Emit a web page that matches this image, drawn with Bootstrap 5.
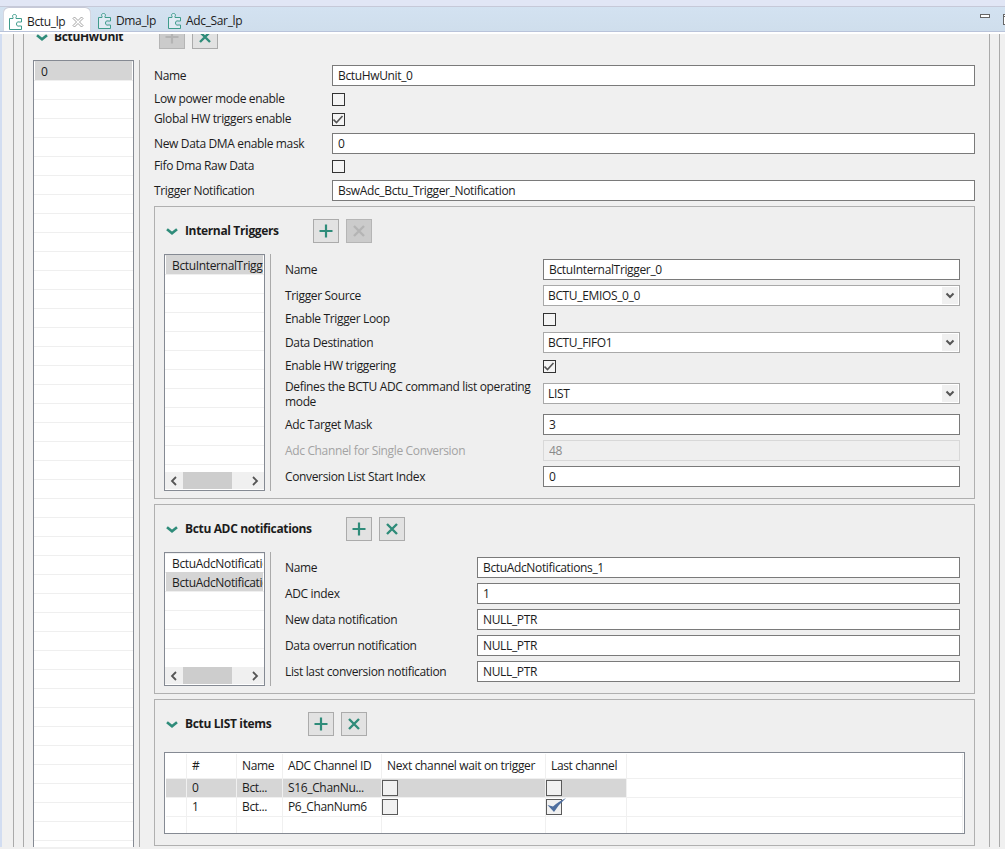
<!DOCTYPE html>
<html lang="en">
<head>
<meta charset="utf-8">
<title>Bctu_Ip</title>
<link href="https://cdn.jsdelivr.net/npm/bootstrap@5.3.0/dist/css/bootstrap.min.css" rel="stylesheet">
<style>
html,body{height:849px;overflow:hidden}
body{background:#f0f0f0;color:#1c1c1c;font:12px/16px "Open Sans","Noto Sans",sans-serif;letter-spacing:-.35px}
.topband{height:6px;background:#e1e6f5}
.tabbar{height:26px;border-top:1px solid #c6c9d8;border-bottom:1px solid #b9c3da;background:linear-gradient(#d3e2f1,#cfdeec);overflow:hidden;padding-left:3px;align-items:flex-start}
.tabbar .tb-item{height:25px;display:flex;align-items:center;gap:4px;color:#1c1c1c;font-size:12px;padding:2px 0 0 6px}
.tb-active{width:88px;height:27px!important;background:#fff;border-radius:6px 6px 0 0;box-shadow:inset 0 1px 0 #c6c9d8,inset 1px 0 0 #d5d8e2,inset -1px 0 0 #d5d8e2;margin-right:1px}
.tb-active svg.closex{margin-left:3px}
.tb-two{margin-right:6px}
.winbtns{margin-left:auto;gap:13px;height:25px;margin-right:-8px}
.contentwrap{height:815px;border-top:2px solid #fff;margin-top:0;overflow:hidden;background:linear-gradient(90deg,#d2ddf1 2px,#f0f0f0 2px);padding:0 5px 0 13px}
.shell-a,.shell-b{height:100%;border-left:1px solid #aaa;border-right:1px solid #aaa}
.shell-a{padding:0 9px}
.shell-b{padding:0 14px 0 9px;overflow:hidden}
.hd-row{display:flex;align-items:center;height:24px}
.hw-top{margin-top:-9px}
.hd-chev{width:12px;margin-left:3px;margin-right:6px;flex:none}
.sect .hd-chev{margin-left:2px;margin-right:7px}
.hd-title{font-weight:700;font-size:12px;white-space:nowrap;flex:none}
.w-hw{width:105px}.w-int{width:128px}.w-adc{width:161px}.w-lst{width:123px}
.tool{width:26px;height:24px;padding:0;border:1px solid #ababab;border-radius:0;background:#e2e2e2;display:flex;align-items:center;justify-content:center;margin-right:7px}
.tool:disabled{opacity:1;background:#cbcbcb;border-color:#b5b5b5}
.body-main{display:flex;margin-top:11px}
.hw-list{width:101px;min-height:800px;flex:none}
.lst{background-color:#fff;border:1px solid #858a93;padding:0 1px;display:flex;flex-direction:column;overflow:hidden;background-image:repeating-linear-gradient(#efefef 0 1px,transparent 1px 19px)}
.lst .list-group{border-radius:0;flex:1 1 auto}
.lst .list-group-item{height:19px;padding:3px 0 0 6px;background:transparent;border:0;border-radius:0;color:#1c1c1c;font-size:12px;line-height:16px;white-space:nowrap;overflow:hidden}
.lst .sel{background:#d5d5d5}
.hscroll{height:17px;display:flex;align-items:center;justify-content:space-between;background:#f0f0f0;margin:0 -1px 1px;flex:none;position:relative;padding:0 5px}
.thumb{position:absolute;left:18px;top:0;bottom:0;width:49px;background:#cdcdcd}
.split{width:1px;background:#aaa;flex:none}
.split-m{margin:0 14px 0 5px}
.split-s{margin:0 14px 0 5px}
.fm{flex:1 1 auto;min-width:0;display:flex;flex-direction:column}
.frow{display:flex;align-items:center;height:21px;margin-top:5px;flex:none}
.frow.ck{height:20px;margin-top:3px}
.frow.ck .lb{margin-bottom:2px}
.frow.nx{margin-top:0}
.frow.m2{margin-top:2px}
.frow.m3{margin-top:3px}
.frow.m4{margin-top:4px}
.frow.m7{margin-top:7px}
.frow.first{margin-top:0}
.frow.tall{height:28px;margin-top:3px}
.frow.tall .lb{padding-top:2px}
.lb{flex:none;line-height:15px}
.lb-a{width:178px}.lb-b{width:258px}.lb-c{width:192px}
.lb-dis{color:#a3a3a3}
.txt.form-control{height:21px;min-height:21px;padding:0 5px;font-size:12px;line-height:19px;letter-spacing:-.35px;color:#1c1c1c;border:1px solid #7a7a7a;border-radius:0;background-color:#fff;box-shadow:none}
.txt.form-control:disabled{background:#efefef;border-color:#d8d8d8;color:#8a8a8a;opacity:1}
.pick.form-select{height:21px;min-height:21px;padding:0 20px 0 4px;font-size:12px;line-height:19px;letter-spacing:-.35px;color:#1c1c1c;border:1px solid #a9a9a9;border-radius:0;background-color:#fff;background-position:right 1px center;background-size:16px 17px;background-image:url("data:image/svg+xml,%3Csvg xmlns='http://www.w3.org/2000/svg' width='16' height='17'%3E%3Crect width='16' height='17' fill='%23f0f0f0'/%3E%3Cpath d='M4.5 6.5 8 10l3.5-3.5' fill='none' stroke='%23555' stroke-width='2'/%3E%3C/svg%3E")}
.cbx.form-check-input{width:13px;height:13px;margin:0;border:1px solid #333;border-radius:0;background-color:#f4f4f4;box-shadow:none;flex:none}
.cbx.form-check-input:checked{background-color:#f4f4f4;border-color:#333;background-size:13px 13px;background-image:url("data:image/svg+xml,%3Csvg xmlns='http://www.w3.org/2000/svg' width='13' height='13'%3E%3Cpath d='M1.5 6.5 4.5 9.5 10.500 3' fill='none' stroke='%23555' stroke-width='1.6'/%3E%3C/svg%3E")}
.sect{background:#efefef;border:1px solid #b0b0b0;padding:12px 14px 7px 9px}
.sect-a{margin-top:5px}
.sect-b{margin-top:5px}
.sect-c{margin-top:5px;padding-bottom:11px}
.sect-in{display:flex;margin-top:11px}
.sl{width:101px;flex:none}
.fmpad{padding:5px 0 4px}
.gridbox{margin:16px -5px 0 0;height:82px;border:1px solid #858a93;background:#fff;padding:1px;overflow:hidden}
.dt{table-layout:fixed;border-collapse:collapse;width:100%;font-size:12px;line-height:16px}
.dt th,.dt td{font-weight:400;padding:0 0 0 5.500px;white-space:nowrap;overflow:hidden;border-right:1px solid #f0f0f0;border-bottom:1px solid #f0f0f0;vertical-align:middle;height:19px}
.dt th{height:24px}
.dt tr.sel-row td{background:#d6d6d6}
.dt tr.sel-row td.fill{background:#fff}
.dt td.bcell{padding-left:0;overflow:visible;position:relative}
.bx{display:block;width:16px;height:16px;border:1px solid #5a5a5a;background:#f1f1f1}
.tick{position:absolute;left:0;top:0}
.c0{width:20px}.c1{width:50px}.c2{width:46px}.c3{width:99px}.c4{width:164px}.c5{width:81px}
</style>
</head>
<body>
<svg width="0" height="0" class="d-block position-absolute" aria-hidden="true">
  <defs>
    <symbol id="puz" viewBox="0 0 14 16"><path d="M.5 4.500H4V3.200C3 2 3.600.5 5.500.5S8 2 7 3.200V4.500h5.500V8H10C8.600 7.400 7.500 8.400 7.500 10s1.100 2.600 2.500 2H12.500V15.500H.5Z" fill="#fff" fill-opacity=".35" stroke="#3f9c8c"/></symbol>
    <symbol id="plus" viewBox="0 0 16 16"><path d="M8 1.500V14.500M1.500 8H14.500" stroke="currentColor" stroke-width="2.200" fill="none"/></symbol>
    <symbol id="cross" viewBox="0 0 16 16"><path d="M3 3 13 13M13 3 3 13" stroke="currentColor" stroke-width="2.400" fill="none"/></symbol>
    <symbol id="chev" viewBox="0 0 12 7"><path d="M1 1.200 6 5.300 11 1.200" fill="none" stroke="#2f8c7a" stroke-width="2.600"/></symbol>
    <symbol id="sl" viewBox="0 0 8 10"><path d="M6 1 2 5l4 4" fill="none" stroke="#555" stroke-width="1.800"/></symbol>
    <symbol id="sr" viewBox="0 0 8 10"><path d="M2 1l4 4-4 4" fill="none" stroke="#555" stroke-width="1.800"/></symbol>
  </defs>
</svg>

<div class="topband"></div>
<div class="tabbar d-flex">
  <div class="tb-item tb-active">
    <svg width="14" height="16"><use href="#puz"/></svg><span>Bctu_lp</span>
    <svg class="closex" width="12" height="12" viewBox="0 0 12 12"><path d="M1 2.500 2.500 1 6 4.500 9.500 1 11 2.500 7.500 6 11 9.500 9.500 11 6 7.500 2.500 11 1 9.500 4.500 6Z" fill="#fff" stroke="#8a8a8a" stroke-width=".8"/></svg>
  </div>
  <div class="tb-item tb-two"><svg width="14" height="16"><use href="#puz"/></svg><span>Dma_lp</span></div>
  <div class="tb-item"><svg width="14" height="16"><use href="#puz"/></svg><span>Adc_Sar_lp</span></div>
  <div class="winbtns d-flex align-items-center">
    <svg width="10" height="4" viewBox="0 0 10 4" class="mb-2"><rect x=".5" y=".5" width="9" height="3" fill="#fff" stroke="#666"/></svg>
    <svg width="10" height="11" viewBox="0 0 10 11"><rect x=".5" y=".5" width="9" height="10" fill="#fff" stroke="#666"/><path d="M0 2.500H10" stroke="#666"/></svg>
  </div>
</div>

<div class="contentwrap">
 <div class="shell-a">
  <div class="shell-b">
    <div class="hd-row hw-top">
      <svg class="hd-chev" height="7"><use href="#chev"/></svg>
      <span class="hd-title w-hw">BctuHwUnit</span>
      <button class="tool btn" type="button" disabled aria-label="Add"><svg width="16" height="16" style="color:#b4b4b4"><use href="#plus"/></svg></button>
      <button class="tool btn" type="button" aria-label="Remove"><svg width="16" height="16" style="color:#2f8c7a"><use href="#cross"/></svg></button>
    </div>

    <div class="body-main">
      <div class="lst hw-list">
        <div class="list-group"><div class="list-group-item sel">0</div></div>
      </div>
      <div class="split split-m"></div>
      <div class="fm">
        <div class="frow"><label class="lb lb-a">Name</label><input class="txt form-control" value="BctuHwUnit_0"></div>
        <div class="frow ck"><label class="lb lb-a">Low power mode enable</label><input class="cbx form-check-input" type="checkbox"></div>
        <div class="frow ck nx"><label class="lb lb-a">Global HW triggers enable</label><input class="cbx form-check-input" type="checkbox" checked></div>
        <div class="frow m4"><label class="lb lb-a">New Data DMA enable mask</label><input class="txt form-control" value="0"></div>
        <div class="frow ck m2"><label class="lb lb-a">Fifo Dma Raw Data</label><input class="cbx form-check-input" type="checkbox"></div>
        <div class="frow m4"><label class="lb lb-a">Trigger Notification</label><input class="txt form-control" value="BswAdc_Bctu_Trigger_Notification"></div>

        <section class="sect sect-a">
          <div class="hd-row">
            <svg class="hd-chev" height="7"><use href="#chev"/></svg>
            <span class="hd-title w-int">Internal Triggers</span>
            <button class="tool btn" type="button" aria-label="Add"><svg width="16" height="16" style="color:#2f8c7a"><use href="#plus"/></svg></button>
            <button class="tool btn" type="button" disabled aria-label="Remove"><svg width="16" height="16" style="color:#b4b4b4"><use href="#cross"/></svg></button>
          </div>
          <div class="sect-in">
            <div class="lst sl">
              <div class="list-group"><div class="list-group-item sel">BctuInternalTrigger_0</div></div>
              <div class="hscroll"><svg width="8" height="10"><use href="#sl"/></svg><span class="thumb"></span><svg width="8" height="10"><use href="#sr"/></svg></div>
            </div>
            <div class="split split-s"></div>
            <div class="fm fmpad">
              <div class="frow first"><label class="lb lb-b">Name</label><input class="txt form-control" value="BctuInternalTrigger_0"></div>
              <div class="frow"><label class="lb lb-b">Trigger Source</label><select class="pick form-select"><option>BCTU_EMIOS_0_0</option></select></div>
              <div class="frow ck"><label class="lb lb-b">Enable Trigger Loop</label><input class="cbx form-check-input" type="checkbox"></div>
              <div class="frow m3"><label class="lb lb-b">Data Destination</label><select class="pick form-select"><option>BCTU_FIFO1</option></select></div>
              <div class="frow ck"><label class="lb lb-b">Enable HW triggering</label><input class="cbx form-check-input" type="checkbox" checked></div>
              <div class="frow tall"><label class="lb lb-b pe-2">Defines the BCTU ADC command list operating mode</label><select class="pick form-select"><option>LIST</option></select></div>
              <div class="frow m7"><label class="lb lb-b">Adc Target Mask</label><input class="txt form-control" value="3"></div>
              <div class="frow"><label class="lb lb-b lb-dis">Adc Channel for Single Conversion</label><input class="txt form-control" value="48" disabled></div>
              <div class="frow"><label class="lb lb-b">Conversion List Start Index</label><input class="txt form-control" value="0"></div>
            </div>
          </div>
        </section>

        <section class="sect sect-b">
          <div class="hd-row">
            <svg class="hd-chev" height="7"><use href="#chev"/></svg>
            <span class="hd-title w-adc">Bctu ADC notifications</span>
            <button class="tool btn" type="button" aria-label="Add"><svg width="16" height="16" style="color:#2f8c7a"><use href="#plus"/></svg></button>
            <button class="tool btn" type="button" aria-label="Remove"><svg width="16" height="16" style="color:#2f8c7a"><use href="#cross"/></svg></button>
          </div>
          <div class="sect-in">
            <div class="lst sl">
              <div class="list-group">
                <div class="list-group-item">BctuAdcNotifications_0</div>
                <div class="list-group-item sel">BctuAdcNotifications_1</div>
              </div>
              <div class="hscroll"><svg width="8" height="10"><use href="#sl"/></svg><span class="thumb"></span><svg width="8" height="10"><use href="#sr"/></svg></div>
            </div>
            <div class="split split-s"></div>
            <div class="fm fmpad">
              <div class="frow first"><label class="lb lb-c">Name</label><input class="txt form-control" value="BctuAdcNotifications_1"></div>
              <div class="frow"><label class="lb lb-c">ADC index</label><input class="txt form-control" value="1"></div>
              <div class="frow"><label class="lb lb-c">New data notification</label><input class="txt form-control" value="NULL_PTR"></div>
              <div class="frow"><label class="lb lb-c">Data overrun notification</label><input class="txt form-control" value="NULL_PTR"></div>
              <div class="frow"><label class="lb lb-c">List last conversion notification</label><input class="txt form-control" value="NULL_PTR"></div>
            </div>
          </div>
        </section>

        <section class="sect sect-c">
          <div class="hd-row">
            <svg class="hd-chev" height="7"><use href="#chev"/></svg>
            <span class="hd-title w-lst">Bctu LIST items</span>
            <button class="tool btn" type="button" aria-label="Add"><svg width="16" height="16" style="color:#2f8c7a"><use href="#plus"/></svg></button>
            <button class="tool btn" type="button" aria-label="Remove"><svg width="16" height="16" style="color:#2f8c7a"><use href="#cross"/></svg></button>
          </div>
          <div class="gridbox">
            <table class="dt">
              <colgroup><col class="c0"><col class="c1"><col class="c2"><col class="c3"><col class="c4"><col class="c5"><col></colgroup>
              <thead><tr><th></th><th>#</th><th>Name</th><th>ADC Channel ID</th><th>Next channel wait on trigger</th><th>Last channel</th><th></th></tr></thead>
              <tbody>
                <tr class="sel-row"><td></td><td>0</td><td>Bct...</td><td>S16_ChanNu...</td><td class="bcell"><span class="bx"></span></td><td class="bcell"><span class="bx"></span></td><td class="fill"></td></tr>
                <tr><td></td><td>1</td><td>Bct...</td><td>P6_ChanNum6</td><td class="bcell"><span class="bx"></span></td><td class="bcell"><span class="bx"></span><svg class="tick" width="20" height="16" viewBox="0 0 20 16"><path d="M1.500 7 7 8.500Q11 4.500 20 0Q13 6 8 14Z" fill="#4f6f9f"/></svg></td><td></td></tr>
                <tr><td></td><td></td><td></td><td></td><td></td><td></td><td></td></tr>
              </tbody>
            </table>
          </div>
        </section>
      </div>
    </div>
  </div>
 </div>
</div>
</body>
</html>
